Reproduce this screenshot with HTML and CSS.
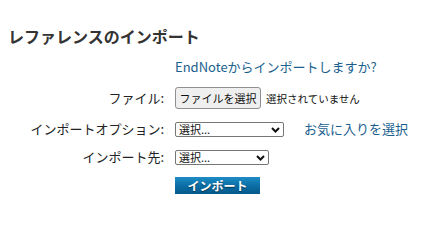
FILE: index.html
```html
<!DOCTYPE html>
<html lang="ja">
<head>
  <meta charset="UTF-8">
  <meta name="viewport" content="width=device-width, initial-scale=1.0">
  <title>レファレンスのインポート</title>
  <link rel="stylesheet" href="styles.css">
</head>
<body>
  <div class="page">
    <h1 class="title">レファレンスのインポート</h1>
    <form class="import-form">
      <div class="label"></div>
      <div class="field"><a class="link" href="#">EndNoteからインポートしますか?</a></div>

      <label class="label">ファイル:</label>
      <div class="field">
        <button type="button" class="file-btn">ファイルを選択</button>
        <span class="file-name">選択されていません</span>
      </div>

      <label class="label">インポートオプション:</label>
      <div class="field">
        <span class="select-wrap">
          <select class="select select-wide"><option>選択...</option></select>
          <svg class="chevron" width="9" height="6" viewBox="0 0 9 6"><polyline points="1,1 4.5,4.5 8,1" fill="none" stroke="#111" stroke-width="2"/></svg>
        </span>
        <a class="link fav" href="#">お気に入りを選択</a>
      </div>

      <label class="label">インポート先:</label>
      <div class="field">
        <span class="select-wrap">
          <select class="select select-narrow"><option>選択...</option></select>
          <svg class="chevron" width="9" height="6" viewBox="0 0 9 6"><polyline points="1,1 4.5,4.5 8,1" fill="none" stroke="#111" stroke-width="2"/></svg>
        </span>
      </div>

      <div class="label"></div>
      <div class="field"><button type="button" class="submit">インポート</button></div>
    </form>
  </div>
</body>
</html>
```

FILE: styles.css
```css
body {
  margin: 0;
  background: #fff;
  font-family: "Noto Sans CJK JP", "Noto Sans", sans-serif;
  color: #222;
}

.page {
  padding: 8px;
}

.title {
  font-size: 16px;
  font-weight: bold;
  color: #333;
  line-height: 23px;
  margin: 17px 0 11px 0;
}

.import-form {
  display: grid;
  grid-template-columns: 156px auto;
  column-gap: 11px;
  row-gap: 12px;
  align-items: center;
}

.label {
  text-align: right;
  font-size: 13px;
  line-height: 16px;
  color: #222;
}

.field {
  display: flex;
  align-items: center;
}

.link {
  font-size: 13px;
  line-height: 16px;
  color: #1b5f8e;
  text-decoration: none;
}

.file-btn {
  font-family: inherit;
  font-size: 11px;
  height: 22px;
  width: 86px;
  padding: 0;
  border: 1px solid #8f8f8f;
  border-radius: 3px;
  background: #efefef;
  color: #111;
}

.file-name {
  font-size: 10.5px;
  margin-left: 5px;
  color: #111;
}

.select-wrap {
  position: relative;
  display: inline-block;
  height: 15px;
}

.select {
  -webkit-appearance: none;
  appearance: none;
  display: block;
  font-family: inherit;
  font-size: 11px;
  line-height: 13px;
  height: 15px;
  padding: 0 0 0 3px;
  border: 1px solid #767676;
  border-radius: 2px;
  background: #fff;
  color: #111;
}

.chevron {
  position: absolute;
  right: 4px;
  top: 5px;
  pointer-events: none;
}

.select-wide {
  width: 109px;
}

.select-narrow {
  width: 94px;
}

.fav {
  margin-left: 20px;
}

.submit {
  font-family: inherit;
  font-size: 12px;
  font-weight: bold;
  color: #fff;
  width: 85px;
  height: 17px;
  padding: 0;
  border: none;
  background: linear-gradient(#1f8cc6, #0b6fa6 50%, #05588a);
  text-shadow: 0 1px 1px rgba(0, 0, 0, 0.5);
  line-height: 17px;
}
```
